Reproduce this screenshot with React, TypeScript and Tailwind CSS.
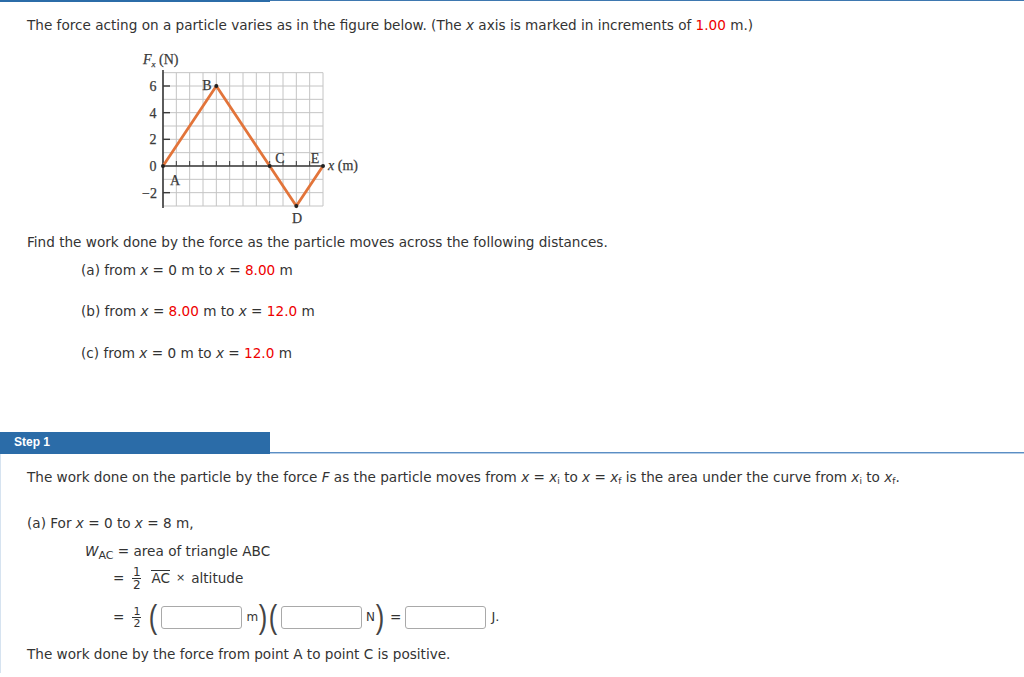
import React from 'react';

const u = 40 / 3;
const ox = 33;
const oy = 118;

function ForceGraph() {
    const verticals = Array.from({ length: 13 }, (_, i) => ox + i * u);
    const horizontals = Array.from({ length: 11 }, (_, j) => oy - (j - 3) * u);
    const pts: [number, number][] = [[0, 0], [4, 6], [8, 0], [10, -3], [12, 0]];
    const px = (p: [number, number]) => `${ox + p[0] * u},${oy - p[1] * u}`;

    return (
        <svg width="250" height="180" viewBox="0 0 250 180" className="block" style={{ fontFamily: '"Liberation Serif", serif' }}>
            {/* grid */}
            {verticals.map((x, i) => (
                <line key={`v${i}`} x1={x} y1={oy - 7 * u} x2={x} y2={oy + 3 * u} stroke="#c4c4c4" strokeWidth="1" />
            ))}
            {horizontals.map((y, i) => (
                <line key={`h${i}`} x1={ox} y1={y} x2={ox + 12 * u} y2={y} stroke="#c4c4c4" strokeWidth="1" />
            ))}
            {/* axes */}
            <line x1={ox} y1={22} x2={ox} y2={160} stroke="#3a3a3a" strokeWidth="1.6" />
            <line x1={ox} y1={oy} x2={ox + 12 * u} y2={oy} stroke="#3a3a3a" strokeWidth="1.6" />
            {[6, 4, 2, -2].map(v => (
                <line key={v} x1={ox} y1={oy - v * u} x2={ox + 7} y2={oy - v * u} stroke="#3a3a3a" strokeWidth="1.4" />
            ))}
            {Array.from({ length: 11 }, (_, i) => (
                <line key={`t${i}`} x1={ox + (i + 1) * u} y1={oy} x2={ox + (i + 1) * u} y2={oy - 5} stroke="#3a3a3a" strokeWidth="1" />
            ))}
            {/* curve */}
            <polyline points={pts.map(px).join(' ')} fill="none" stroke="#e2743a" strokeWidth="2.8" strokeLinejoin="miter" />
            {pts.map((p, i) => (
                <circle key={i} cx={ox + p[0] * u} cy={oy - p[1] * u} r="2" fill="#222" />
            ))}
            {/* labels */}
            <g fill="#3a3a3a" fontSize="14" stroke="#3a3a3a" strokeWidth="0.25">
                <text x="13" y="16"><tspan fontStyle="italic">F</tspan><tspan fontStyle="italic" fontSize="9" dy="3">x</tspan><tspan dy="-3"> (N)</tspan></text>
                <text x="23" y="43" textAnchor="middle">6</text>
                <text x="23" y="70" textAnchor="middle">4</text>
                <text x="23" y="96" textAnchor="middle">2</text>
                <text x="23" y="123" textAnchor="middle">0</text>
                <text x="27" y="150" textAnchor="end">−2</text>
                <text x="45" y="137" textAnchor="middle">A</text>
                <text x="77" y="42" textAnchor="middle">B</text>
                <text x="150" y="115" textAnchor="middle">C</text>
                <text x="185" y="115" textAnchor="middle">E</text>
                <text x="167" y="175" textAnchor="middle">D</text>
                <text x="198" y="122"><tspan fontStyle="italic">x</tspan> (m)</text>
            </g>
        </svg>
    );
}

function Frac({ small }: { small?: boolean }) {
    return (
        <span className={small ? "inline-flex flex-col items-center text-[11px] leading-[11px] ml-[8px] mr-[7px]" : "inline-flex flex-col items-center text-[12px] leading-[12px] ml-[8px] mr-[10px]"}>
            <span>1</span>
            <span className="w-[9px] border-t border-[#333]" />
            <span>2</span>
        </span>
    );
}

function Box() {
    return <span className="block w-[81px] h-[23px] border border-[#a9a9a9] rounded-[3px] bg-white" />;
}

function Paren({ c }: { c: string }) {
    return <span className="inline-block text-[30px] leading-[30px] text-[#444] scale-y-[1.12] scale-x-[0.85]" style={{ fontFamily: '"Liberation Sans", Arial, sans-serif' }}>{c}</span>;
}

export default function App() {
    return (
        <div className="min-h-screen bg-white text-[#333] text-[13.6px] leading-[18px]" style={{ fontFamily: '"DejaVu Sans", Verdana, sans-serif' }}>
            {/* Top rule */}
            <div className="flex items-start">
                <div className="w-[270px] h-[2px] bg-[#2b6ca8]" />
                <div className="flex-1 h-px bg-[#3e78b0]" />
            </div>

            <div className="px-[27px] pt-[14px]">
                <p>
                    The force acting on a particle varies as in the figure below. (The <i>x</i> axis is marked in increments of <span className="text-[#e00]">1.00</span> m.)
                </p>
                <div className="ml-[103px] mt-[14px]">
                    <ForceGraph />
                </div>
                <p className="mt-[5px]">Find the work done by the force as the particle moves across the following distances.</p>
                <p className="ml-[54px] mt-[10px]">(a) from <i>x</i> = 0 m to <i>x</i> = <span className="text-[#e00]">8.00</span> m</p>
                <p className="ml-[54px] mt-[23px]">(b) from <i>x</i> = <span className="text-[#e00]">8.00</span> m to <i>x</i> = <span className="text-[#e00]">12.0</span> m</p>
                <p className="ml-[54px] mt-[24px]">(c) from <i>x</i> = 0 m to <i>x</i> = <span className="text-[#e00]">12.0</span> m</p>
            </div>

            {/* Step header */}
            <div className="flex items-end mt-[70px]">
                <div className="w-[270px] h-[22px] bg-[#2b6ca8] text-white font-bold text-[12px] leading-[20px] pl-[14px]" style={{ fontFamily: '"Liberation Sans", Arial, sans-serif' }}>
                    Step 1
                </div>
                <div className="flex-1 flex flex-col">
                    <div className="h-px bg-[#5b8ec4]" />
                    <div className="h-px bg-[#b5cde6]" />
                </div>
            </div>

            <div className="border-l border-[#d6e3f0] pl-[26px] pb-[10px]">
                <p className="pt-[14px]">
                    The work done on the particle by the force <i>F</i> as the particle moves from <i>x</i> = <i>x</i><sub className="text-[9px]">i</sub> to <i>x</i> = <i>x</i><sub className="text-[9px]">f</sub> is the area under the curve from <i>x</i><sub className="text-[9px]">i</sub> to <i>x</i><sub className="text-[9px]">f</sub>.
                </p>
                <p className="mt-[28px]">(a) For <i>x</i> = 0 to <i>x</i> = 8 m,</p>
                <p className="ml-[58px] mt-[10px]">
                    <i>W</i><sub className="text-[11px]">AC</sub> = area of triangle ABC
                </p>
                <div className="ml-[86px] mt-[5px] flex items-center h-[26px]">
                    <span>=</span>
                    <Frac />
                    <span className="border-t border-[#333] leading-[15px]">AC</span>
                    <span className="mx-[6px] text-[11px]">×</span>
                    <span>altitude</span>
                </div>
                <div className="ml-[86px] mt-[10px] flex items-center h-[32px]">
                    <span>=</span>
                    <Frac small />
                    <Paren c="(" />
                    <span className="ml-[3px]"><Box /></span>
                    <span className="ml-[4px] text-[12px]">m</span>
                    <Paren c=")" />
                    <Paren c="(" />
                    <span className="ml-[3px]"><Box /></span>
                    <span className="ml-[4px] text-[12px]">N</span>
                    <Paren c=")" />
                    <span className="ml-[5px] mr-[4px]">=</span>
                    <Box />
                    <span className="ml-[5px] text-[13px]">J.</span>
                </div>
                <p className="mt-[12px]">The work done by the force from point A to point C is positive.</p>
            </div>
        </div>
    );
}
